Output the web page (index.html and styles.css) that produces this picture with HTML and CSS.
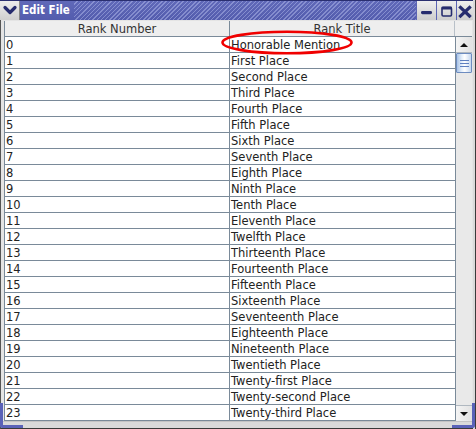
FILE: index.html
```html
<!DOCTYPE html>
<html>
<head>
<meta charset="utf-8">
<link rel="stylesheet" href="styles.css">
</head>
<body>
<div class="window">
  <div class="titlebar">
    <div class="menu-btn">
      <svg width="20" height="20" viewBox="0 0 20 20"><path d="M5 7.5 L10 12.5 L15 7.5" fill="none" stroke="#262c6e" stroke-width="3.2" stroke-linecap="round" stroke-linejoin="round"/></svg>
    </div>
    <div class="title">Edit File</div>
    <div class="stripes"></div>
    <div class="tbtn">
      <svg width="19" height="20" viewBox="0 0 19 20"><rect x="4" y="11" width="11" height="3.2" rx="1.4" fill="#262c6e"/></svg>
    </div>
    <div class="tbtn">
      <svg width="19" height="20" viewBox="0 0 19 20"><rect x="5" y="7.5" width="9.5" height="8.5" rx="1.2" fill="none" stroke="#262c6e" stroke-width="1.6"/><rect x="4.5" y="6.5" width="10.5" height="3" rx="1" fill="#262c6e"/></svg>
    </div>
    <div class="tbtn close">
      <svg width="16" height="20" viewBox="0 0 16 20"><path d="M3.5 7.5 L12.5 16 M12.5 7.5 L3.5 16" stroke="#262c6e" stroke-width="3.2" stroke-linecap="square"/></svg>
    </div>
  </div>
  <div class="body">
    <div class="pane">
      <div class="head-row">
        <div class="th c1">Rank Number</div>
        <div class="th c2">Rank Title</div>
        <div class="corner"></div>
      </div>
      <div class="body-row">
        <div class="rows">
          <div class="row"><div class="td c1">0</div><div class="td c2">Honorable Mention</div></div>
          <div class="row"><div class="td c1">1</div><div class="td c2">First Place</div></div>
          <div class="row"><div class="td c1">2</div><div class="td c2">Second Place</div></div>
          <div class="row"><div class="td c1">3</div><div class="td c2">Third Place</div></div>
          <div class="row"><div class="td c1">4</div><div class="td c2">Fourth Place</div></div>
          <div class="row"><div class="td c1">5</div><div class="td c2">Fifth Place</div></div>
          <div class="row"><div class="td c1">6</div><div class="td c2">Sixth Place</div></div>
          <div class="row"><div class="td c1">7</div><div class="td c2">Seventh Place</div></div>
          <div class="row"><div class="td c1">8</div><div class="td c2">Eighth Place</div></div>
          <div class="row"><div class="td c1">9</div><div class="td c2">Ninth Place</div></div>
          <div class="row"><div class="td c1">10</div><div class="td c2">Tenth Place</div></div>
          <div class="row"><div class="td c1">11</div><div class="td c2">Eleventh Place</div></div>
          <div class="row"><div class="td c1">12</div><div class="td c2">Twelfth Place</div></div>
          <div class="row"><div class="td c1">13</div><div class="td c2">Thirteenth Place</div></div>
          <div class="row"><div class="td c1">14</div><div class="td c2">Fourteenth Place</div></div>
          <div class="row"><div class="td c1">15</div><div class="td c2">Fifteenth Place</div></div>
          <div class="row"><div class="td c1">16</div><div class="td c2">Sixteenth Place</div></div>
          <div class="row"><div class="td c1">17</div><div class="td c2">Seventeenth Place</div></div>
          <div class="row"><div class="td c1">18</div><div class="td c2">Eighteenth Place</div></div>
          <div class="row"><div class="td c1">19</div><div class="td c2">Nineteenth Place</div></div>
          <div class="row"><div class="td c1">20</div><div class="td c2">Twentieth Place</div></div>
          <div class="row"><div class="td c1">21</div><div class="td c2">Twenty-first Place</div></div>
          <div class="row"><div class="td c1">22</div><div class="td c2">Twenty-second Place</div></div>
          <div class="row"><div class="td c1">23</div><div class="td c2">Twenty-third Place</div></div>
        </div>
        <div class="vscroll">
          <div class="sb-btn"><svg width="16" height="16" viewBox="0 0 16 16"><path d="M4 10 L12 10 L8 6 Z" fill="#111"/></svg></div>
          <div class="thumb"><span></span><span></span><span></span></div>
          <div class="track"></div>
          <div class="sb-btn"><svg width="16" height="16" viewBox="0 0 16 16"><path d="M4 6 L12 6 L8 10 Z" fill="#111"/></svg></div>
        </div>
      </div>
    </div>
  </div>
  <div class="bottom"></div>
  <svg class="mark" width="138" height="28" viewBox="0 0 138 28"><ellipse cx="68" cy="13.5" rx="64.5" ry="10.8" fill="none" stroke="#f00000" stroke-width="2.6"/></svg>
</div>
</body>
</html>
```
FILE: styles.css
```css
html, body {
  margin: 0;
  padding: 0;
  background: #d9d9d9;
}

.window {
  position: relative;
  width: 476px;
  height: 429px;
  box-sizing: border-box;
  padding-right: 2px;
  border-right: 1px solid #3a3a3a;
  background: #dadada;
  font-family: "DejaVu Sans", sans-serif;
  overflow: hidden;
}

.window::before,
.window::after {
  content: "";
  position: absolute;
  bottom: 1px;
  width: 20px;
  height: 22px;
  border-bottom: 3px solid #5a62b8;
}

.window::before {
  left: 0;
  border-left: 3px solid #5a62b8;
  border-bottom-left-radius: 3px;
}

.window::after {
  right: 0;
  border-right: 3px solid #5a62b8;
  border-bottom-right-radius: 3px;
}

.titlebar {
  display: flex;
  height: 20px;
  box-sizing: border-box;
  border-top: 1px solid #2a2f70;
  background: #5b64b4;
}

.menu-btn {
  width: 20px;
  height: 19px;
  background: linear-gradient(#ececec, #cfcfcf);
  box-sizing: border-box;
  border-right: 1px solid #8a8a8a;
  overflow: hidden;
}

.menu-btn svg {
  display: block;
  margin-top: -1px;
}

.title {
  color: #ffffff;
  font-family: "DejaVu Sans Condensed", "DejaVu Sans", sans-serif;
  font-weight: bold;
  font-size: 11.5px;
  line-height: 19px;
  padding: 0 4px 0 2px;
  background: linear-gradient(#6069b9, #535cad);
  white-space: nowrap;
}

.stripes {
  flex: 1;
  background:
    repeating-linear-gradient(135deg, rgba(255,255,255,0.0) 0px, rgba(255,255,255,0.0) 2px, rgba(170,178,230,0.55) 2px, rgba(170,178,230,0.55) 3px),
    linear-gradient(#6069b9, #535cad);
}

.tbtn {
  width: 19px;
  height: 19px;
  margin-left: 1px;
  background: linear-gradient(#eeeeee, #cdcdcd);
  overflow: hidden;
}

.tbtn svg {
  display: block;
  margin-top: -1px;
}

.tbtn.close {
  width: 16px;
}

.body {
  display: flex;
  padding: 1px 1px 0 3px;
  border-left: 1px solid #555555;
  background: #e4e4e4;
}

.pane {
  width: 468px;
  display: flex;
  flex-direction: column;
  border-left: 1px solid #7a8a99;
  box-sizing: border-box;
}

.head-row {
  display: flex;
  height: 16px;
  box-sizing: border-box;
  border-bottom: 1px solid #7a8a99;
  background: #eeeeee;
}

.th {
  box-sizing: border-box;
  font-size: 11.5px;
  line-height: 13px;
  padding-top: 2px;
  color: #333333;
  text-align: center;
  white-space: nowrap;
}

.c1 {
  width: 225px;
  border-right: 1px solid #7a8a99;
}

.c2 {
  width: 225px;
}

.th.c2 {
  border-right: 1px solid #b8c0c8;
}

.corner {
  flex: 1;
  background: #eeeeee;
}

.body-row {
  display: flex;
}

.rows {
  width: 450px;
  background: #ffffff;
}

.row {
  display: flex;
  height: 16px;
  box-sizing: border-box;
  border-bottom: 1px solid #7a8a99;
}

.td {
  box-sizing: border-box;
  font-size: 11.5px;
  line-height: 13px;
  padding-top: 2px;
  color: #222222;
  padding-left: 1px;
  white-space: nowrap;
}

.vscroll {
  flex: 1;
  display: flex;
  flex-direction: column;
  border-left: 1px solid #7a8a99;
  background: #e9e9e9;
}

.sb-btn {
  height: 16px;
  background: linear-gradient(90deg, #f4f4f4, #e2e2e2);
  box-sizing: border-box;
  border-bottom: 1px solid #b0b8c0;
}

.sb-btn:last-child {
  border-bottom: none;
  border-top: 1px solid #b0b8c0;
}

.sb-btn svg {
  display: block;
}

.thumb {
  height: 20px;
  box-sizing: border-box;
  border: 1px solid #6d8cc0;
  border-radius: 1px;
  background: linear-gradient(90deg, #a9c3e6 0%, #e6f0fb 35%, #ffffff 55%, #c5d7ef 100%);
  display: flex;
  flex-direction: column;
  align-items: center;
  justify-content: center;
  gap: 2px;
}

.thumb span {
  display: block;
  width: 9px;
  height: 1px;
  background: #5f80c0;
}

.track {
  flex: 1;
  background: #e9e9e9;
}

.bottom {
  height: 8px;
  box-sizing: border-box;
  border-left: 1px solid #555555;
  border-bottom: 1px solid #3a3a3a;
  border-top: 1px solid #c4c4c4;
  background: #dadada;
}

.mark {
  position: absolute;
  left: 219px;
  top: 29px;
}
```
